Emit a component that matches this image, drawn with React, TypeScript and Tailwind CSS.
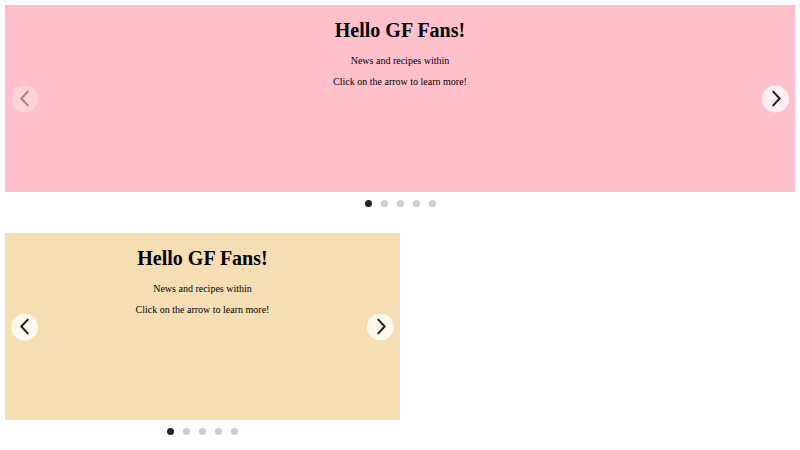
import React from "react";

function Chevron({ dir }: { dir: "left" | "right" }) {
  return (
    <svg width="22" height="22" viewBox="0 0 24 24" fill="none" stroke="#222" strokeWidth="2.2" strokeLinecap="round" strokeLinejoin="round">
      {dir === "left" ? <path d="M15 4.5l-7 7.5 7 7.5" /> : <path d="M9 4.5l7 7.5-7 7.5" />}
    </svg>
  );
}

function Carousel({ bg, width, prevDisabled }: { bg: string; width: string; prevDisabled?: boolean }) {
  return (
    <div className={width}>
      <div className={`relative h-[187px] ${bg} text-center text-black`} style={{ fontFamily: '"Liberation Serif", "Times New Roman", serif' }}>
        <h1 className="pt-[10px] text-[20px] font-bold leading-[30px]">Hello GF Fans!</h1>
        <p className="mt-[5px] text-[10px] leading-[21px]">News and recipes within</p>
        <p className="text-[10px] leading-[21px]">Click on the arrow to learn more!</p>
        <button
          className={`absolute left-[6px] top-1/2 flex h-[27px] w-[27px] -translate-y-1/2 items-center justify-center rounded-full bg-white/75 ${prevDisabled ? "opacity-40" : ""}`}
        >
          <Chevron dir="left" />
        </button>
        <button className="absolute right-[6px] top-1/2 flex h-[27px] w-[27px] -translate-y-1/2 items-center justify-center rounded-full bg-white/75">
          <Chevron dir="right" />
        </button>
      </div>
      <div className="flex h-[22px] items-center justify-center gap-[9px]">
        {[0, 1, 2, 3, 4].map((i) => (
          <span key={i} className={`h-[7px] w-[7px] rounded-full ${i === 0 ? "bg-[#222]" : "bg-[#ccc]"}`} />
        ))}
      </div>
    </div>
  );
}

export default function App() {
  return (
    <div className="min-h-[450px] bg-white p-[5px]">
      <Carousel bg="bg-[#ffc0cb]" width="w-[790px]" prevDisabled />
      <div className="h-[19px]" />
      <Carousel bg="bg-[#f5deb3]" width="w-[395px]" />
    </div>
  );
}
